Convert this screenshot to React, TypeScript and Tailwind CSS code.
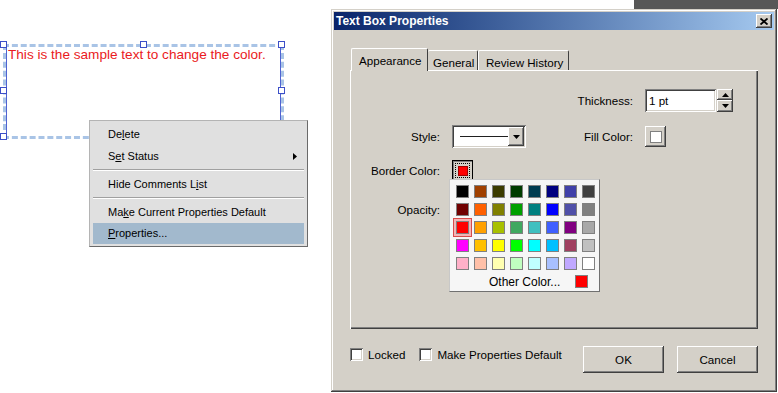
import React from 'react';

// classic win32 bevels
const raised = 'shadow-[inset_-1px_-1px_#404040,inset_1px_1px_#ffffff,inset_-2px_-2px_#808080,inset_2px_2px_#d4d0c8]';
const sunken = 'shadow-[inset_1px_1px_#808080,inset_-1px_-1px_#ffffff,inset_2px_2px_#404040,inset_-2px_-2px_#d4d0c8]';

const palette: string[][] = [
  ['bg-[#000000]', 'bg-[#a04000]', 'bg-[#3c3c00]', 'bg-[#003c00]', 'bg-[#003c50]', 'bg-[#000080]', 'bg-[#4040a8]', 'bg-[#404040]'],
  ['bg-[#700000]', 'bg-[#ff6000]', 'bg-[#808000]', 'bg-[#00a000]', 'bg-[#008080]', 'bg-[#0000ff]', 'bg-[#5050a8]', 'bg-[#808080]'],
  ['bg-[#ff0000]', 'bg-[#ffa000]', 'bg-[#a8c000]', 'bg-[#40a860]', 'bg-[#40c0c0]', 'bg-[#4060ff]', 'bg-[#800080]', 'bg-[#a8a8a8]'],
  ['bg-[#ff00ff]', 'bg-[#ffc000]', 'bg-[#ffff00]', 'bg-[#00ff00]', 'bg-[#00ffff]', 'bg-[#00c0ff]', 'bg-[#a04060]', 'bg-[#c0c0c0]'],
  ['bg-[#ffb0c8]', 'bg-[#ffc0a8]', 'bg-[#ffffb0]', 'bg-[#c0ffc0]', 'bg-[#c0ffff]', 'bg-[#a8c0ff]', 'bg-[#c0a8ff]', 'bg-[#ffffff]'],
];

function Handle({ className }: { className: string }) {
  return <div className={`absolute w-[7px] h-[7px] bg-white border border-[#3c4fc8] ${className}`} />;
}

function MenuItem({ children, active, arrow }: { children: React.ReactNode; active?: boolean; arrow?: boolean }) {
  return (
    <div className={`mx-[3px] flex items-center justify-between pl-[15px] pr-[7px] ${active ? 'h-[21px] bg-[#a2b9cd]' : 'h-[22px]'}`}>
      <span>{children}</span>
      {arrow && (
        <svg width="4" height="7" viewBox="0 0 4 7">
          <path d="M0 0 L4 3.5 L0 7 Z" fill="#000" />
        </svg>
      )}
    </div>
  );
}

function Sep() {
  return (
    <div className="mx-[3px] h-[6px] flex items-center">
      <div className="w-full border-t border-t-[#a0a0a0] border-b border-b-white" />
    </div>
  );
}

export default function App() {
  return (
    <div className="relative w-[778px] h-[393px] overflow-hidden bg-white font-['Liberation_Sans',Arial,sans-serif] text-black">
      {/* window behind, top right */}
      <div className="absolute left-[634px] top-0 w-[144px] h-[9px] bg-[#575757]" />

      {/* text box annotation on the page */}
      <div className="absolute left-[3px] top-[44px] w-[281px] h-[95px] border-[3px] border-dashed border-[#a9c4e6]">
        <div className="h-full border-l border-r border-[#4f63d2]">
          <p className="pl-[1px] text-[13.6px] leading-[15px] text-[#ea1a22] whitespace-nowrap">This is the sample text to change the color.</p>
        </div>
        <Handle className="left-[-6px] top-[-6px]" />
        <Handle className="left-[134px] top-[-6px]" />
        <Handle className="left-[272px] top-[-6px]" />
        <Handle className="left-[-6px] top-[40px]" />
        <Handle className="left-[272px] top-[40px]" />
        <Handle className="left-[-6px] top-[86px]" />
      </div>

      {/* context menu */}
      <div className="absolute left-[89px] top-[120px] w-[219px] h-[127px] bg-[#e0e0e0] border border-[#b4b4b4] border-r-[#6a6a6a] border-b-[#6a6a6a] pt-[2px] text-[11px]">
        <MenuItem>De<u>l</u>ete</MenuItem>
        <MenuItem arrow>S<u>e</u>t Status</MenuItem>
        <Sep />
        <MenuItem>Hide Comments L<u>i</u>st</MenuItem>
        <Sep />
        <MenuItem>Ma<u>k</u>e Current Properties Default</MenuItem>
        <MenuItem active><u>P</u>roperties...</MenuItem>
      </div>

      {/* dialog */}
      <div className="absolute left-[331px] top-[9px] w-[446px] h-[383px] bg-[#d4d0c8] p-[3px] text-[11.6px] shadow-[inset_-1px_-1px_#404040,inset_1px_1px_#d4d0c8,inset_-2px_-2px_#808080,inset_2px_2px_#ffffff]">
        <div className="h-[18px] flex items-center justify-between pl-[2px] pr-[2px] bg-linear-to-r from-[#0a246a] to-[#a6caf0]">
          <span className="text-white font-bold text-[12px] leading-none">Text Box Properties</span>
          <div className={`w-[16px] h-[14px] bg-[#d4d0c8] flex items-center justify-center ${raised}`}>
            <svg width="8" height="7" viewBox="0 0 8 7">
              <path d="M0.5 0.5 L7.5 6.5 M7.5 0.5 L0.5 6.5" stroke="#000" strokeWidth="1.8" />
            </svg>
          </div>
        </div>

        <div className="pl-[16px] pt-[18px]">
          {/* tabs */}
          <div className="flex items-end h-[22px] pl-[1px]">
            <div className="relative z-10 -mb-px w-[77px] h-[23px] pl-[7px] pt-[3px] bg-[#d4d0c8] border-t border-l border-white border-r border-r-[#404040] rounded-t-[2px]">
              Appearance
            </div>
            <div className="w-[50px] h-[20px] pl-[5px] pt-[3px] border-t border-white border-r border-r-[#404040] rounded-t-[2px]">
              General
            </div>
            <div className="w-[91px] h-[20px] pl-[7px] pt-[3px] border-t border-white border-l border-r border-r-[#404040] rounded-t-[2px]">
              Review History
            </div>
          </div>

          {/* panel */}
          <div className="relative w-[408px] h-[259px] pt-[19px] shadow-[inset_1px_1px_#ffffff,inset_-1px_-1px_#404040,inset_-2px_-2px_#808080]">
            <div className="flex items-center h-[23px]">
              <div className="w-[283px] text-right">Thickness:</div>
              <div className={`ml-[12px] w-[71px] h-[23px] bg-white flex items-center pl-[4px] ${sunken}`}>1 pt</div>
              <div className="ml-[1px] w-[16px] h-[23px] flex flex-col">
                <div className={`h-[11px] flex items-center justify-center ${raised}`}>
                  <svg width="7" height="4" viewBox="0 0 7 4"><path d="M0 4 L3.5 0 L7 4 Z" fill="#000" /></svg>
                </div>
                <div className={`h-[12px] flex items-center justify-center ${raised}`}>
                  <svg width="7" height="4" viewBox="0 0 7 4"><path d="M0 0 L3.5 4 L7 0 Z" fill="#000" /></svg>
                </div>
              </div>
            </div>

            <div className="flex items-center h-[23px] mt-[13px]">
              <div className="w-[90px] text-right">Style:</div>
              <div className={`ml-[12px] w-[74px] h-[23px] bg-white flex items-center pl-[8px] pr-[2px] ${sunken}`}>
                <div className="w-[48px] border-t border-[#202020]" />
                <div className={`ml-auto w-[16px] h-[19px] bg-[#d4d0c8] flex items-center justify-center ${raised}`}>
                  <svg width="7" height="4" viewBox="0 0 7 4"><path d="M0 0 L3.5 4 L7 0 Z" fill="#000" /></svg>
                </div>
              </div>
              <div className="w-[107px] text-right">Fill Color:</div>
              <div className={`ml-[12px] w-[21px] h-[21px] flex items-center justify-center ${raised}`}>
                <div className="w-[12px] h-[12px] bg-white border border-[#808080]" />
              </div>
            </div>

            <div className="flex items-center h-[21px] mt-[12px]">
              <div className="w-[90px] text-right">Border Color:</div>
              <div className="ml-[12px] w-[21px] h-[21px] flex items-center justify-center border border-black shadow-[inset_1px_1px_#808080]">
                <div className="w-[15px] h-[15px] border border-dotted border-black flex items-center justify-center">
                  <div className="w-[10px] h-[10px] bg-[#ff0000] border border-[#a00000]" />
                </div>
              </div>
            </div>

            <div className="flex items-center h-[21px] mt-[18px]">
              <div className="w-[90px] text-right">Opacity:</div>
            </div>

            {/* colour picker dropdown */}
            <div className="absolute left-[99px] top-[109px] w-[151px] h-[113px] bg-[#f6f6f6] border border-[#c8c8c8] border-r-[#707070] border-b-[#707070] pl-[6px] pt-[5px]">
              <div className="grid grid-cols-8 gap-[5px] w-[139px]">
                {palette.flat().map((c, i) => (
                  <div
                    key={i}
                    className={`w-[13px] h-[13px] border border-[#808080] ${c} ${i === 16 ? 'shadow-[0_0_0_2px_#f4b4b4,0_0_0_3px_#d84a4a]' : ''}`}
                  />
                ))}
              </div>
              <div className="flex items-center h-[13px] mt-[5px]">
                <span className="ml-[33px] text-[12px]">Other Color...</span>
                <div className="ml-auto mr-[11px] w-[13px] h-[13px] bg-[#ff0000] border border-[#808080]" />
              </div>
            </div>
          </div>

          {/* footer */}
          <div className="flex w-[408px] h-[27px] mt-[17px]">
            <div className="flex items-center h-[17px]">
              <div className={`w-[13px] h-[13px] bg-white ${sunken}`} />
              <span className="ml-[5px]">Locked</span>
              <div className={`ml-[14px] w-[13px] h-[13px] bg-white ${sunken}`} />
              <span className="ml-[5px]">Make Properties Default</span>
            </div>
            <div className="ml-auto flex gap-[13px]">
              <div className={`w-[81px] h-[27px] flex items-center justify-center ${raised}`}>OK</div>
              <div className={`w-[81px] h-[27px] flex items-center justify-center ${raised}`}>Cancel</div>
            </div>
          </div>
        </div>
      </div>
    </div>
  );
}
